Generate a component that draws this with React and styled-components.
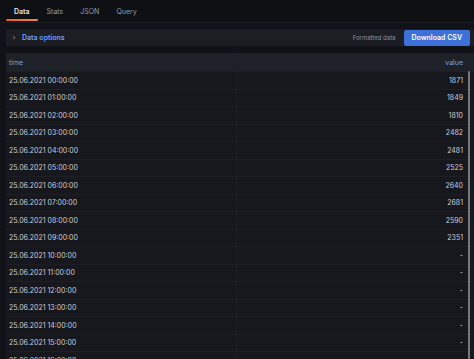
import React from 'react';
import styled, { createGlobalStyle } from 'styled-components';

const GlobalStyle = createGlobalStyle`
  html, body {
    margin: 0;
    padding: 0;
    background: #111217;
    overflow: hidden;
  }
  body {
    font-family: Inter, "Noto Sans", sans-serif;
    -webkit-font-smoothing: antialiased;
  }
`;

const values = [1871, 1849, 1810, 2482, 2481, 2525, 2640, 2681, 2590, 2351];

const rows = Array.from({ length: 18 }, (_, hour) => ({
  time: `25.06.2021 ${String(hour).padStart(2, '0')}:00:00`,
  value: values[hour] !== undefined ? String(values[hour]) : '-'
}));

const Page = styled.div`
  width: 474px;
  height: 359px;
  display: flex;
  flex-direction: column;
  overflow: hidden;
  background: #111217;
`;

const TabBar = styled.div`
  height: 23px;
  display: flex;
  align-items: stretch;
  padding-left: 6px;
  background: #0f1014;
  border-bottom: 1px solid #1b1d22;
  box-sizing: border-box;
`;

const Tab = styled.div`
  position: relative;
  display: flex;
  align-items: center;
  padding: 1px 8px 0;
  margin-right: 1px;
  font-size: 7px;
  font-weight: ${props => (props.active ? 600 : 400)};
  color: ${props => (props.active ? '#e3e3ea' : '#9a9ba3')};

  &::after {
    content: '';
    display: ${props => (props.active ? 'block' : 'none')};
    position: absolute;
    left: 0;
    right: 0;
    bottom: 1px;
    height: 2px;
    border-radius: 1px;
    background: linear-gradient(90deg, #f05a28, #f2884a);
  }
`;

const Body = styled.div`
  flex: 1;
  display: flex;
  flex-direction: column;
  padding: 6px 0 0 6px;
  min-height: 0;
`;

const OptionsBar = styled.div`
  height: 17px;
  display: flex;
  align-items: center;
  background: #1c1e24;
  padding-right: 4px;
`;

const Chevron = styled.span`
  width: 16px;
  text-align: center;
  font-size: 7px;
  color: #9a9ba3;
`;

const OptionsTitle = styled.span`
  flex: 1;
  font-size: 7px;
  font-weight: 600;
  color: #6e9fff;
`;

const FormattedLabel = styled.span`
  font-size: 6px;
  color: #8f9098;
  margin-right: 8px;
`;

const CsvButton = styled.button`
  height: 16px;
  padding: 0 8px;
  border: none;
  border-radius: 2px;
  background: #3d71d9;
  color: #ffffff;
  font-family: inherit;
  font-size: 7px;
  font-weight: 600;
`;

const Table = styled.div`
  margin-top: 7px;
  flex: 1;
  position: relative;
  overflow: hidden;
`;

const HeaderRow = styled.div`
  height: 18px;
  display: grid;
  grid-template-columns: 230px 1fr;
  background: #1f2128;
`;

const Row = styled.div`
  height: 17.5px;
  display: grid;
  grid-template-columns: 230px 1fr;
  box-sizing: border-box;
  border-top: 1px solid #1d1f24;
  background: #16181d;
`;

const Cell = styled.div`
  display: flex;
  align-items: center;
  padding: 0 ${props => (props.right ? '11px' : '3px')};
  justify-content: ${props => (props.right ? 'flex-end' : 'flex-start')};
  font-size: 7px;
  color: #ccccdc;
  border-left: ${props => (props.right ? '1px solid #1d1f25' : 'none')};
`;

const HeadCell = styled(Cell)`
  color: #6e9fff;
`;

const ScrollThumb = styled.div`
  position: absolute;
  right: 4px;
  top: 18px;
  bottom: 0;
  width: 2px;
  border-radius: 1px;
  background: #75777e;
`;

export default function App() {
  return (
    <Page>
      <GlobalStyle />
      <TabBar>
        <Tab active>Data</Tab>
        <Tab>Stats</Tab>
        <Tab>JSON</Tab>
        <Tab>Query</Tab>
      </TabBar>
      <Body>
        <OptionsBar>
          <Chevron>›</Chevron>
          <OptionsTitle>Data options</OptionsTitle>
          <FormattedLabel>Formatted data</FormattedLabel>
          <CsvButton>Download CSV</CsvButton>
        </OptionsBar>
        <Table>
          <HeaderRow>
            <HeadCell>time</HeadCell>
            <HeadCell right>value</HeadCell>
          </HeaderRow>
          {rows.map(row => (
            <Row key={row.time}>
              <Cell>{row.time}</Cell>
              <Cell right>{row.value}</Cell>
            </Row>
          ))}
          <ScrollThumb />
        </Table>
      </Body>
    </Page>
  );
}
